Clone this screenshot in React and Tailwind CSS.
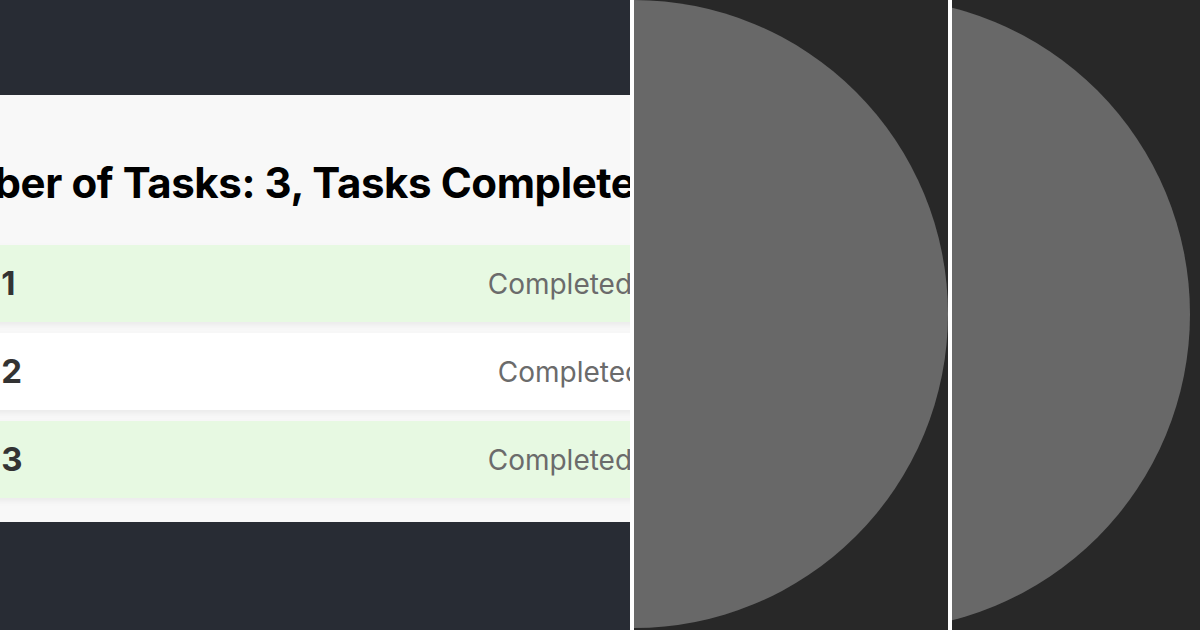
const tasks = [
  { id: 1, done: true },
  { id: 2, done: false },
  { id: 3, done: true },
]

function TaskRow({ task }) {
  return (
    <div
      className={`flex h-[77px] items-center justify-between pl-[47px] pr-[44px] shadow-[0_3px_6px_rgba(0,0,0,0.06)] ${
        task.done ? 'bg-[#e7f9e2]' : 'bg-white'
      }`}
    >
      <span className="text-[33px] font-bold text-[#333]">Task {task.id}</span>
      <span className="text-[28px] text-[#6b6b6b]">Completed: {task.done ? 'Yes' : 'No'}</span>
    </div>
  )
}

export default function App() {
  const doneCount = tasks.filter((t) => t.done).length

  return (
    <div className="flex h-[630px] w-[1200px] overflow-hidden font-['Inter','Liberation_Sans',sans-serif]">
      <div className="w-[630px] shrink-0 overflow-hidden bg-[#282c34] pt-[95px]">
        <div className="ml-[-130px] w-[870px] bg-[#f8f8f8] pb-6">
          <h1 className="pt-[67px] text-center text-[42px] font-bold leading-none tracking-[-0.4px] text-black">
            Number of Tasks: {tasks.length}, Tasks Completed: {doneCount}
          </h1>
          <div className="mt-[41px] flex flex-col gap-[11px]">
            {tasks.map((task) => (
              <TaskRow key={task.id} task={task} />
            ))}
          </div>
        </div>
      </div>

      <div className="w-[4px] shrink-0 bg-white" />

      <div className="w-[314px] shrink-0 bg-[#282828]">
        <svg className="block" width="314" height="630">
          <circle cx="0" cy="314" r="314" fill="#686868" />
        </svg>
      </div>

      <div className="w-[4px] shrink-0 bg-white" />

      <div className="flex-1 bg-[#282828]">
        <svg className="block" width="248" height="630">
          <circle cx="-78" cy="314" r="316" fill="#686868" />
        </svg>
      </div>
    </div>
  )
}
